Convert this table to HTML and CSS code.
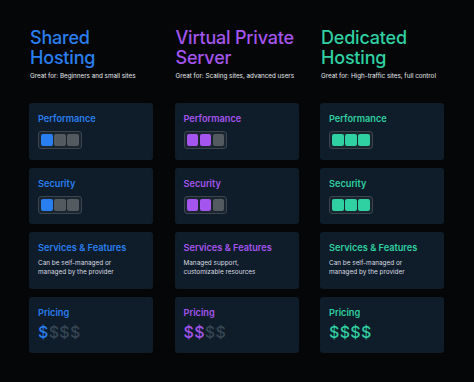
FILE: index.html
```html
<!DOCTYPE html>
<html>
<head>
<meta charset="utf-8">
<link rel="stylesheet" href="styles.css">
</head>
<body>
<div class="plans">
  <section class="plan blue">
    <h1 class="title">Shared<br>Hosting</h1>
    <p class="sub">Great for: Beginners and small sites</p>
    <div class="cards">
      <div class="card"><h2>Performance</h2><div class="meter"><i class="on"></i><i></i><i></i></div></div>
      <div class="card"><h2>Security</h2><div class="meter"><i class="on"></i><i></i><i></i></div></div>
      <div class="card"><h2>Services &amp; Features</h2><p class="desc">Can be self-managed or<br>managed by the provider</p></div>
      <div class="card"><h2>Pricing</h2><div class="price"><span class="on">$</span><span>$</span><span>$</span><span>$</span></div></div>
    </div>
  </section>
  <section class="plan purple">
    <h1 class="title">Virtual Private<br>Server</h1>
    <p class="sub">Great for: Scaling sites, advanced users</p>
    <div class="cards">
      <div class="card"><h2>Performance</h2><div class="meter"><i class="on"></i><i class="on"></i><i></i></div></div>
      <div class="card"><h2>Security</h2><div class="meter"><i class="on"></i><i class="on"></i><i></i></div></div>
      <div class="card"><h2>Services &amp; Features</h2><p class="desc">Managed support,<br>customizable resources</p></div>
      <div class="card"><h2>Pricing</h2><div class="price"><span class="on">$</span><span class="on">$</span><span>$</span><span>$</span></div></div>
    </div>
  </section>
  <section class="plan green">
    <h1 class="title">Dedicated<br>Hosting</h1>
    <p class="sub">Great for: High-traffic sites, full control</p>
    <div class="cards">
      <div class="card"><h2>Performance</h2><div class="meter"><i class="on"></i><i class="on"></i><i class="on"></i></div></div>
      <div class="card"><h2>Security</h2><div class="meter"><i class="on"></i><i class="on"></i><i class="on"></i></div></div>
      <div class="card"><h2>Services &amp; Features</h2><p class="desc">Can be self-managed or<br>managed by the provider</p></div>
      <div class="card"><h2>Pricing</h2><div class="price"><span class="on">$</span><span class="on">$</span><span class="on">$</span><span class="on">$</span></div></div>
    </div>
  </section>
</div>
</body>
</html>
```

FILE: styles.css
```css
html, body {
  margin: 0;
  padding: 0;
  background: #040608;
  width: 474px;
  height: 382px;
  overflow: hidden;
  font-family: "Inter", "Noto Sans", sans-serif;
}
.plans {
  display: grid;
  grid-template-columns: 124px 124px 124px;
  column-gap: 21.5px;
  padding: 28px 0 0 29px;
}
.blue { --c: #2a7ff0; }
.purple { --c: #a455ee; }
.green { --c: #2fd0a2; }
.title {
  margin: 0 0 0 1px;
  font-size: 18px;
  line-height: 20px;
  font-weight: 500;
  color: var(--c);
  letter-spacing: -0.2px;
  white-space: nowrap;
}
.sub {
  margin: 4px 0 0 1px;
  font-size: 6.3px;
  line-height: 8px;
  color: #e8eaec;
  white-space: nowrap;
}
.cards {
  margin-top: 23px;
  display: flex;
  flex-direction: column;
  gap: 8px;
}
.card {
  height: 56.5px;
  box-sizing: border-box;
  background: #0f1c29;
  border-radius: 3px;
  padding: 10px 9px 0 9px;
}
.card h2 {
  margin: 0;
  font-size: 9.2px;
  line-height: 11px;
  font-weight: 600;
  color: var(--c);
  white-space: nowrap;
}
.meter {
  margin-top: 7px;
  display: inline-flex;
  gap: 1.5px;
  padding: 2px;
  border: 1px solid #3a4550;
  border-radius: 3px;
  background: #1a2530;
}
.meter i {
  display: block;
  width: 11.5px;
  height: 12px;
  border-radius: 2px;
  background: #545b60;
}
.meter i.on { background: var(--c); }
.desc {
  margin: 6px 0 0 0;
  font-size: 6.4px;
  line-height: 8.5px;
  color: #d8dce0;
  white-space: nowrap;
}
.price {
  margin-top: 5px;
  font-size: 16px;
  line-height: 18px;
  font-weight: 500;
  color: #364753;
  letter-spacing: 0.3px;
}
.price .on { color: var(--c); }
```
